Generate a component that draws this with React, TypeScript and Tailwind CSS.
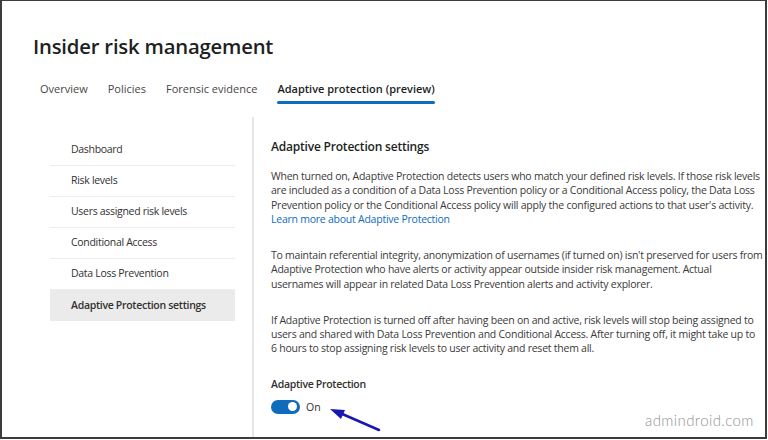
import React from "react";

const navItems = [
  "Dashboard",
  "Risk levels",
  "Users assigned risk levels",
  "Conditional Access",
  "Data Loss Prevention",
  "Adaptive Protection settings",
];

const tabs = ["Overview", "Policies", "Forensic evidence", "Adaptive protection (preview)"];

export default function App() {
  return (
    <div className="w-[768px] h-[440px] bg-white overflow-hidden" style={{ fontFamily: '"Open Sans", "Noto Sans", sans-serif' }}>
      <div className="relative w-[767px] h-[439px] border-2 border-t border-[#3c3c3c] bg-white flex flex-col pl-[31px] overflow-hidden">
        <h1 className="mt-[31px] text-[20.3px] leading-[28px] font-semibold text-[#201f1e] tracking-[-0.2px]">
          Insider risk management
        </h1>
        <div className="mt-[19px] flex gap-[20px] pl-[7px]">
          {tabs.map((t, i) => (
            <div key={t} className="flex flex-col">
              <span
                className={
                  "text-[11px] leading-[20px] whitespace-nowrap " +
                  (i === 3 ? "font-semibold text-[#201f1e]" : "text-[#484644]")
                }
              >
                {t}
              </span>
              <div className={"mt-[2px] h-[3px] rounded-sm " + (i === 3 ? "bg-[#0f6cbd]" : "bg-transparent")} />
            </div>
          ))}
        </div>
        <div className="mt-[13px] flex flex-1">
          <div className="w-[221px] shrink-0 pl-[17px] pt-[18px] border-r-2 border-[#e6e6e6]">
            <div className="w-[185px] flex flex-col">
              {navItems.map((n, i) => (
                <div
                  key={n}
                  className={
                    "h-[31px] flex items-center pl-[21px] text-[10.5px] tracking-[-0.3px] whitespace-nowrap " +
                    (i === navItems.length - 1
                      ? "bg-[#ebebeb] font-semibold text-[#323130]"
                      : "border-b border-[#ededed] text-[#323130]")
                  }
                >
                  {n}
                </div>
              ))}
            </div>
          </div>
          <div className="pl-[17px] pt-[21px] text-[#3b3a39]">
            <div className="text-[12px] leading-[18px] tracking-[-0.2px] font-semibold text-[#201f1e]">
              Adaptive Protection settings
            </div>
            <p className="mt-[13px] text-[10.5px] leading-[14.33px] tracking-[-0.24px] whitespace-nowrap">
              When turned on, Adaptive Protection detects users who match your defined risk levels. If those risk levels
              <br />
              are included as a condition of a Data Loss Prevention policy or a Conditional Access policy, the Data Loss
              <br />
              Prevention policy or the Conditional Access policy will apply the configured actions to that user's activity.
              <br />
              <span className="text-[#0f6cbd]">Learn more about Adaptive Protection</span>
            </p>
            <p className="mt-[21.7px] text-[10.5px] leading-[14.33px] tracking-[-0.24px] whitespace-nowrap">
              To maintain referential integrity, anonymization of usernames (if turned on) isn't preserved for users from
              <br />
              Adaptive Protection who have alerts or activity appear outside insider risk management. Actual
              <br />
              usernames will appear in related Data Loss Prevention alerts and activity explorer.
            </p>
            <p className="mt-[21.7px] text-[10.5px] leading-[14.33px] tracking-[-0.24px] whitespace-nowrap">
              If Adaptive Protection is turned off after having been on and active, risk levels will stop being assigned to
              <br />
              users and shared with Data Loss Prevention and Conditional Access. After turning off, it might take up to
              <br />
              6 hours to stop assigning risk levels to user activity and reset them all.
            </p>
            <div className="mt-[20px] text-[10.5px] leading-[16px] tracking-[-0.3px] font-semibold text-[#323130]">
              Adaptive Protection
            </div>
            <div className="mt-[8px] flex items-center gap-[6px]">
              <div className="w-[29px] h-[14px] rounded-full bg-[#0f6cbd] flex items-center justify-end pr-[3px]">
                <div className="w-[9px] h-[9px] rounded-full bg-white" />
              </div>
              <span className="text-[10.5px] leading-[14px] text-[#323130]">On</span>
            </div>
          </div>
        </div>
        <svg className="absolute left-[320px] top-[398px]" width="62" height="36" viewBox="0 0 62 36">
          <line x1="18" y1="14" x2="57" y2="31" stroke="#1818b0" strokeWidth="2.5" strokeLinecap="round" />
          <polygon points="8,10 23,11 19,20" fill="#1818b0" />
        </svg>
        <div
          className="absolute left-[643px] top-[409px] text-[15px] leading-[20px] tracking-[0.4px] text-[#939393] font-light"
          style={{ fontFamily: 'Lato, "Open Sans", sans-serif' }}
        >
          admindroid.com
        </div>
      </div>
    </div>
  );
}
